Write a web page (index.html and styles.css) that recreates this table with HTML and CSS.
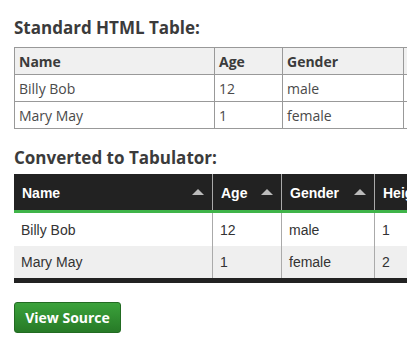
FILE: index.html
```html
<!DOCTYPE html>
<html lang="en">
	<head>
		<meta charset="UTF-8" />
		<meta name="viewport" content="width=device-width, initial-scale=1.0" />
		<title>Tabulator - HTML Table Import</title>

		<link rel="stylesheet" href="styles.css">
	</head>

	<body>
		<div class="page">
			<h3 class="sectionTitle">Standard HTML Table:</h3>
			<table class="plainTable">
				<thead>
					<tr>
						<th class="colName">Name</th>
						<th class="colAge">Age</th>
						<th class="colGender">Gender</th>
						<th class="colHeight">Height</th>
					</tr>
				</thead>
				<tbody>
					<tr>
						<td>Billy Bob</td>
						<td>12</td>
						<td>male</td>
						<td>1</td>
					</tr>
					<tr>
						<td>Mary May</td>
						<td>1</td>
						<td>female</td>
						<td>2</td>
					</tr>
				</tbody>
			</table>

			<h3 class="sectionTitle sectionTitle--second">Converted to Tabulator:</h3>
			<div class="tabulator">
				<div class="tabulator-header">
					<div class="tabulator-col colName">
						<span class="tabulator-col-title">Name</span>
						<span class="tabulator-arrow"></span>
					</div>
					<div class="tabulator-col colAge">
						<span class="tabulator-col-title">Age</span>
						<span class="tabulator-arrow"></span>
					</div>
					<div class="tabulator-col colGender">
						<span class="tabulator-col-title">Gender</span>
						<span class="tabulator-arrow"></span>
					</div>
					<div class="tabulator-col colHeight">
						<span class="tabulator-col-title">Height</span>
						<span class="tabulator-arrow"></span>
					</div>
				</div>
				<div class="tabulator-tableHolder">
					<div class="tabulator-row">
						<div class="tabulator-cell colName">Billy Bob</div>
						<div class="tabulator-cell colAge">12</div>
						<div class="tabulator-cell colGender">male</div>
						<div class="tabulator-cell colHeight">1</div>
					</div>
					<div class="tabulator-row tabulator-row-even">
						<div class="tabulator-cell colName">Mary May</div>
						<div class="tabulator-cell colAge">1</div>
						<div class="tabulator-cell colGender">female</div>
						<div class="tabulator-cell colHeight">2</div>
					</div>
				</div>
			</div>

			<button class="sourceButton">View Source</button>
		</div>
	</body>
</html>
```

FILE: styles.css
```css
html,
body {
	margin: 0;
	overflow: hidden;
	background: #fff;
}

.page {
	padding: 16px 0 0 14px;
	font-family: "Open Sans", sans-serif;
	color: #333;
	width: 600px;
}

.sectionTitle {
	margin: 0 0 8px 0;
	font-size: 17px;
	font-weight: 700;
	line-height: 23px;
	color: #3b3b3b;
}

.sectionTitle--second {
	margin-top: 17px;
	margin-bottom: 5px;
}

/* plain html table */
.plainTable {
	border-collapse: collapse;
	font-size: 14px;
	color: #4a4a4a;
}

.plainTable th,
.plainTable td {
	border: 1px solid #999;
	height: 27px;
	padding: 0 4px;
	text-align: left;
	box-sizing: border-box;
}

.plainTable th {
	background: #f0f0f0;
	font-weight: 700;
	color: #3b3b3b;
}

.plainTable .colName { width: 200px; }
.plainTable .colAge { width: 68px; }
.plainTable .colGender { width: 121px; }
.plainTable .colHeight { width: 100px; }

/* tabulator look */
.tabulator {
	font-family: "Liberation Sans", Arial, sans-serif;
	font-size: 14px;
	border-bottom: 5px solid #222;
	width: 480px;
}

.tabulator-header {
	display: flex;
	background: #222;
	color: #fff;
	border-bottom: 3px solid #3fb449;
	height: 36px;
}

.tabulator-col {
	display: flex;
	align-items: center;
	justify-content: space-between;
	padding: 0 8px;
	box-sizing: border-box;
	border-right: 1px solid #aaa;
	font-weight: 700;
}

.tabulator-col-title {
	padding-top: 1px;
}

.tabulator-arrow {
	width: 0;
	height: 0;
	border-left: 6px solid transparent;
	border-right: 6px solid transparent;
	border-bottom: 6px solid #bbb;
	margin-left: 8px;
}

.colName { width: 199px; }
.colAge { width: 69px; }
.colGender { width: 93px; }
.colHeight { width: 119px; }

.tabulator-row {
	display: flex;
	background: #fff;
	color: #333;
	height: 33px;
}

.tabulator-row-even {
	background: #efefef;
	height: 32px;
}

.tabulator-cell {
	display: flex;
	align-items: center;
	padding: 0 7px;
	box-sizing: border-box;
	border-right: 1px solid #aaa;
}

.sourceButton {
	margin-top: 19px;
	width: 107px;
	height: 31px;
	padding: 0;
	font-family: "Open Sans", sans-serif;
	font-size: 14px;
	font-weight: 700;
	color: #fff;
	background: linear-gradient(to bottom, #3ba23b, #277a27);
	border: 1px solid #226b22;
	border-radius: 3px;
}
```
